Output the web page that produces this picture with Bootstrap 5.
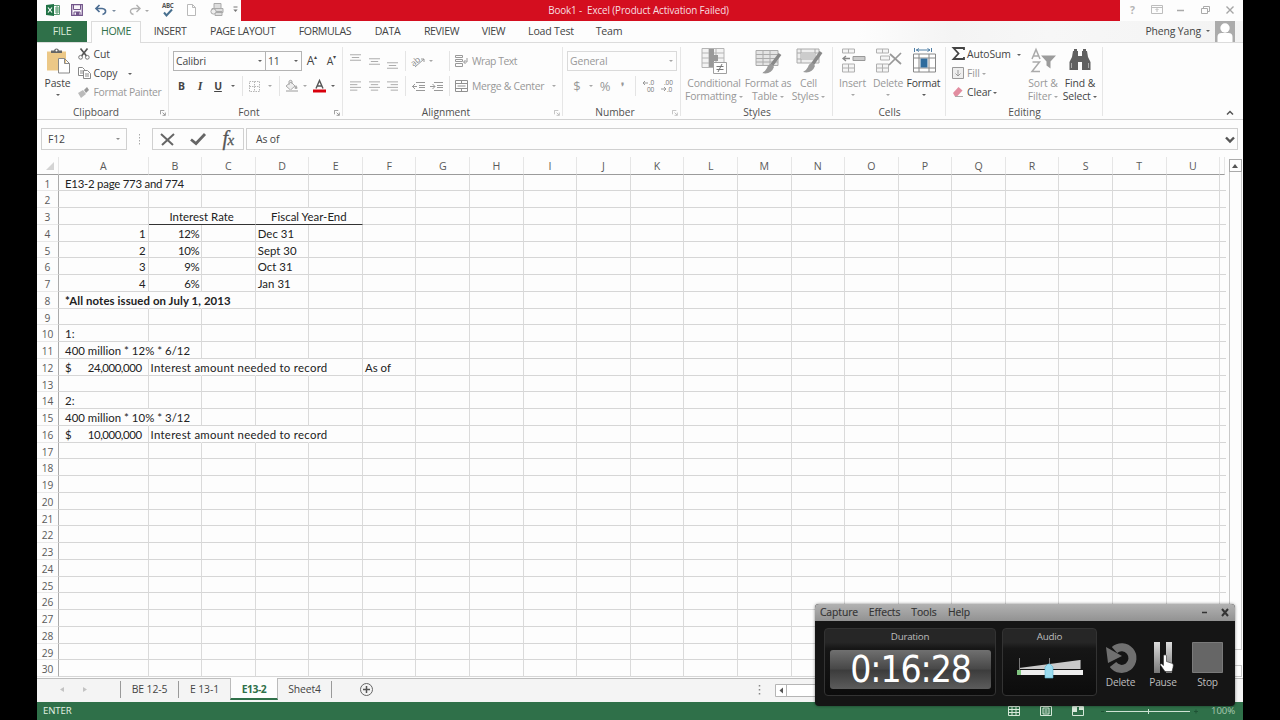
<!DOCTYPE html>
<html lang="en">
<head>
<meta charset="utf-8">
<meta name="viewport" content="width=device-width, initial-scale=1">
<title>Book1 - Excel</title>
<link href="https://cdn.jsdelivr.net/npm/bootstrap@5.3.0/dist/css/bootstrap.min.css" rel="stylesheet">
<style>
  body{background:#000;width:1280px;height:720px;overflow:hidden;font:10.4px/14px "Open Sans","Noto Sans",sans-serif;letter-spacing:-.12px;color:#444}
  .app{width:1206px;height:720px;margin-left:37px;background:#fdfdfd;overflow:hidden}
  svg{display:block;overflow:visible;flex:none}
  .nw{white-space:nowrap}
  .off{color:#989898}
  /* title bar */
  .titlebar{height:21px}
  .qat{display:grid;grid-template-columns:25px 24px 17px 17px 16px 16px 26px 23px 23px 8px;width:204px;padding-left:9px;align-items:center;height:19px}
  .redbar{width:879px;background:#d40e1f;color:#f7dfe0;font-size:9.9px;padding-right:84px;height:21px;line-height:21px}
  .wctl{display:grid;grid-template-columns:25px 24px 24px 25px 24px;height:19px;place-items:center;color:#b4b4b4}
  /* ribbon tabs */
  .rtabs{height:21px;background:linear-gradient(90deg,#fdfdfd 68%,#f4f4f4 76%,#f7f7f7 84%,#f3f3f3)}
  .rtabgrid{display:grid;grid-template-columns:50px 57px 52px 93px 72px 53px 55px 49px 66px 50px;line-height:21px;text-align:center;font-size:10.6px;letter-spacing:-.38px}
  .filetab{background:#2f7049;color:#d9ead9}
  .hometab{color:#2f7049;border:1px solid #dcdcdc;border-bottom:0;margin:0 3px 0 4px;background:#fdfdfd;line-height:19px;position:relative;height:22px}
  .mixed{letter-spacing:-.2px}
  .user{color:#444;font-size:10.4px;gap:5px;padding-bottom:2px}
  /* ribbon */
  .ribbon{height:78px;border-top:1px solid #dcdcdc;border-bottom:1px solid #d2d2d2}
  .rgroup{position:relative;display:flex;flex-direction:column}
  .rgroup::after{content:"";position:absolute;right:0;top:4px;bottom:3px;width:1px;background:#e6e6e6}
  .gbody{height:62px}
  .glabel{height:14px;line-height:15px;text-align:center;font-size:10.2px;color:#505050;position:relative;padding-right:14px;letter-spacing:0}
  .glabel.nolaunch{padding-right:0}
  .glabel svg{position:absolute;right:3px;top:5px}
  .w-clip{width:132px}.w-font{width:174px}.w-align{width:220px}.w-num{width:118px}.w-sty{width:152px}.w-cell{width:113px}.w-edit{width:157px}
  .big{display:flex;flex-direction:column;align-items:center;text-align:center;padding-top:5px;line-height:13.5px}
  .big svg.ic{margin-bottom:2.5px;width:26px;height:26px}
  .w-sty .big span,.w-cell .big span{letter-spacing:-.2px}
  .rrow{display:grid;align-items:center;justify-items:center}
  .vs{width:1px;height:20px;background:#e4e4e4}
  .arr{display:inline-block;border:2.3px solid transparent;border-top:2.8px solid currentColor;border-bottom:0;vertical-align:2px;opacity:.85}
  .clipcols{display:grid;grid-template-columns:41px 90px}
  .small3{display:grid;grid-template-rows:19px 19px 20px;padding-top:1px;align-items:center}
  .small3>div{display:grid;grid-template-columns:15px auto;align-items:center;justify-content:start}
  .clipcols .small3>div{grid-template-columns:15.5px auto}
  .painter{letter-spacing:-.32px}
  .fbox{display:flex;border:1px solid #b4b4b4;height:20px;align-items:center;justify-content:space-between;padding:0 3px 0 2px;width:100%}
  .fbox.gen{margin:8px 0 0 4px;width:110px;border-color:#dadada;color:#989898}
  .f1{grid-template-columns:93px 36px 20px 19px;margin:8px 0 0 4px;height:20px}
  .f1 sup{font-size:6px;top:-6px}
  .f2{grid-template-columns:19px 18px 18px 12px 6px 19px 11px 9px 15px 12px 17px 10px;margin:5px 0 0 3px;height:20px}
  .ital{font:italic 700 12px "Liberation Serif",serif}
  .a1,.a2{grid-template-columns:19px 18.5px 18.5px 6px 20px 17px 9px 15px auto auto;justify-content:start;margin:8px 0 0 3px;height:20px}
  .a1{letter-spacing:-.25px}
  .a2{margin-top:5px;letter-spacing:-.3px}
  .n2{grid-template-columns:20px 7px 22px 13px 13px 15px 20px;margin:5px 0 0 4px;height:20px}
  .sym{font-size:13px}
  .s1{display:grid;grid-template-columns:62px 46px 35px;padding-left:2px}
  .c1{display:grid;grid-template-columns:35px 36px 35px;padding-left:2px}
  .e1{display:grid;grid-template-columns:74px 34px 40px;padding-left:6px}
  .dark{color:#3c3c3c}
  /* formula bar */
  .fbar{height:37px;padding:8px 5px 0 4px}
  .fb{height:22px;border:1px solid #d0d0d0;display:flex;align-items:center}
  .fb.nm{width:86px;padding:0 6px;justify-content:space-between}
  .fb.bt{width:92px;display:grid;grid-template-columns:29px 31px 30px;place-items:center}
  .fb.tx{width:992px;padding:0 3px 0 9px;justify-content:space-between}
  .grip{width:25px;height:22px}
  .fxi{font:italic 20px/18px "Liberation Serif",serif;letter-spacing:-.5px;color:#555;-webkit-text-stroke:.3px #555}
  .fxi span{font-size:15px}
  /* worksheet */
  .sheetwrap{height:521px}
  .sheet{display:grid;grid-template-columns:22px 89.6px repeat(20,53.58px) 5px;grid-template-rows:17.6px repeat(30,16.75px);width:1188.5px;overflow:hidden;font-family:Lato,"Open Sans",sans-serif;font-size:11.4px;letter-spacing:.03px;color:#222}
  .hd{font:10.6px/18px "Open Sans",sans-serif;text-align:center;color:#5a5a5a;border-bottom:1px solid #9b9b9b;border-right:1px solid #e6e6e6}
  .rn{font:10.2px/18px "Open Sans",sans-serif;text-align:center;color:#5a5a5a;border-right:1px solid #ababab;border-bottom:1px solid #e8e8e8}
  .cl{border-right:1px solid #dadada;border-bottom:1px solid #d6d6d6;line-height:17.5px;white-space:pre;padding:0 2px 0 6px;min-width:0;overflow:visible}
  .cl.std{padding-left:2px}
  .cl.open{border-right-color:transparent}
  .cl.under{border-bottom-color:#333}
  .tight{letter-spacing:-.24px}
  .amt{letter-spacing:-.42px}
  .loose{letter-spacing:.28px}
  .boldnote{letter-spacing:.1px}
  .vscroll{width:13px;margin:2px 0 0 3px}
  .vscroll .up{height:13px;border:1px solid #aaa}
  .vscroll .track{height:478px;border:1px solid #c9c9c9;border-top:0}
  .vscroll .down{height:12px;border:1px solid #c9c9c9;margin-top:15px}
  /* sheet tabs, status bar */
  .stabs{height:24px;background:#f4f4f4;border-top:1px solid #bdbdbd;display:grid;grid-template-columns:84px 58px 51px 48px 54px 68px 374px 416px;text-align:center;line-height:21px}
  .stabs>div{height:21px}
  .sep{border-right:1px solid #9a9a9a;height:17px!important;line-height:17px;margin-top:2px}
  .tabnav{gap:19px;padding:0 14px 0 3px}
  .active-tab{background:#fdfdfd;color:#2f7049;font-weight:700;border-bottom:2px solid #2f7049;border-left:1px solid #bbb;border-right:1px solid #bbb;margin-top:-1px;letter-spacing:-.5px;line-height:23px;height:22px!important}
  .status{height:18px;background:#2f7049;color:#e3f0e3;line-height:18px;font-size:9.6px}
  .sicons{display:grid;grid-template-columns:33px 32px 31px 110px 40px;place-items:center;height:18px}
  .zoompct{color:#a9c9b1}
  /* recorder window floating over the workbook */
  .rec{position:absolute;left:815px;top:604px;width:420px;height:102px;border-radius:4px;background:#151515;box-shadow:0 0 3px rgba(0,0,0,.5);overflow:hidden;color:#bdbdbd}
  .rmenu{height:17px;background:linear-gradient(#b2b2b2,#929292);color:#333;line-height:16px;display:grid;grid-template-columns:48px 43px 36px 34px 219px 20px 19px;text-align:center;letter-spacing:-.1px;-webkit-text-stroke:.15px #333}
  .rbody{display:flex;padding:7px 0 0 9px}
  .panel{height:68px;border:1px solid #333;border-radius:4px;background:linear-gradient(#262626 20%,#161616 30%,#0c0c0c);text-align:center;line-height:16px;font-size:9.8px;letter-spacing:-.25px}
  .dur{width:172px;margin-right:6px}.aud{width:95px;margin-right:6px}
  .meter{margin-top:12px}
  .lcd{margin:5px 4px 0 5px;height:39px;border-radius:3px;background:linear-gradient(#707070,#484848 48%,#3c3c3c 52%,#5c5c5c);color:#fff;font:37px/40px "DejaVu Sans Condensed","DejaVu Sans",sans-serif;letter-spacing:-1.1px}
  .rbtns{display:grid;grid-template-columns:35px 50px 39px;text-align:center;padding-top:14px;line-height:14px;font-size:10.2px;letter-spacing:-.25px}
  .rbtns svg{margin:0 auto 2px}
</style>
</head>
<body>
<svg width="0" height="0" class="position-absolute">
  <symbol id="launch" viewBox="0 0 7 7"><path d="M.5 5V.5H5M3 3l3 3M6.2 3v3.2H3" fill="none" stroke="#8a8a8a"/></symbol>
  <symbol id="al" viewBox="0 0 12 10"><path d="M0 .5h12M0 3.5h8M0 6.5h12M0 9.5h8" stroke="#a5a5a5"/></symbol>
  <symbol id="ac" viewBox="0 0 12 10"><path d="M0 .5h12M2 3.5h8M0 6.5h12M2 9.5h8" stroke="#a5a5a5"/></symbol>
  <symbol id="ar" viewBox="0 0 12 10"><path d="M0 .5h12M4 3.5h8M0 6.5h12M4 9.5h8" stroke="#a5a5a5"/></symbol>
  <symbol id="a3" viewBox="0 0 12 7"><path d="M0 .5h12M2 3.5h8M0 6.5h12" stroke="#a5a5a5"/></symbol>
</svg>
<div class="app d-flex flex-column">
  <div class="titlebar d-flex">
    <div class="qat">
      <svg width="14" height="12" viewBox="0 0 14 12"><path d="M8 1.5h5.500v9H8M9 4h4M9 6h4M9 8h4M11 2v8" fill="none" stroke="#5a9b73"/><path d="M0 1l8-1v12l-8-1z" fill="#217346"/><path d="M2 3.500l4 5M6 3.500l-4 5" stroke="#fff" stroke-width="1.200"/></svg>
      <svg width="12" height="12" viewBox="0 0 12 12"><path d="M.7.700h10.600v10.600H.7z" fill="#f8f5fa" stroke="#72558a" stroke-width="1.300"/><path d="M2.500 1v4.500h7V1M3 11V8h6v3" fill="none" stroke="#72558a"/><path d="M5 8h3v3H5z" fill="#72558a"/></svg>
      <svg width="12" height="10" viewBox="0 0 12 10"><path d="M1 3.500H7Q11 4 10.500 7Q10 9 7.500 9.500M4.500 0L1 3.500L4.500 7" fill="none" stroke="#4c6d92" stroke-width="1.700"/></svg>
      <span><span class="arr" style="color:#64788f"></span></span>
      <svg width="12" height="10" viewBox="0 0 12 10"><path d="M11 3.500H5Q1 4 1.500 7Q2 9 4.500 9.500M7.500 0L11 3.500L7.500 7" fill="none" stroke="#b0b0b0" stroke-width="1.400"/></svg>
      <span><span class="arr off"></span></span>
      <svg width="14" height="14" viewBox="0 0 14 14"><text x="1" y="5" font-size="6.200" font-weight="700" fill="#555" letter-spacing="-.3">ABC</text><path d="M3 9.500l2.500 3L11 6.500" fill="none" stroke="#48708f" stroke-width="2"/></svg>
      <svg width="9" height="12" viewBox="0 0 9 12"><path d="M.5.500h5l3 3v8h-8zM5.500.500v3h3" fill="#fff" stroke="#b9b9b9"/></svg>
      <svg width="14" height="13" viewBox="0 0 14 13"><path d="M2 5.500h11v4H2zM4 5V.500h7V5M5 8.500h7v4H5z" fill="#ddd" stroke="#aaa"/><circle cx="3.500" cy="8.500" r="2.600" fill="#eee" stroke="#aaa"/></svg>
      <svg width="5" height="7"><path d="M.5 1h4" stroke="#777"/><path d="M.3 3.500h4.400L2.500 6z" fill="#777"/></svg>
    </div>
    <div class="redbar text-center nw">Book1 -&nbsp; Excel (Product Activation Failed)</div>
    <div class="wctl">
      <b>?</b>
      <svg width="12" height="9"><path d="M.5.500h11v8H.5zM.5 2.500h11M6 7V4M4.500 5L6 3.500 7.500 5" fill="none" stroke="#bdbdbd"/></svg>
      <svg width="8" height="2"><path d="M0 1.500h7" stroke="#aaa" stroke-width="1.500"/></svg>
      <svg width="9" height="8"><path d="M.5 2.500h6v5h-6zM2.500 2V.500h6v5h-2" fill="none" stroke="#aaa"/></svg>
      <svg width="8" height="8"><path d="M.5.500l7 7M7.500.500l-7 7" stroke="#a5a5a5" stroke-width="1.400"/></svg>
    </div>
  </div>
  <div class="rtabs d-flex justify-content-between">
    <div class="rtabgrid nw"><div class="filetab">FILE</div><div class="hometab">HOME</div><div>INSERT</div><div>PAGE LAYOUT</div><div>FORMULAS</div><div>DATA</div><div>REVIEW</div><div>VIEW</div><div class="mixed">Load Test</div><div class="mixed">Team</div></div>
    <div class="user d-flex align-items-center pe-2 nw"><span>Pheng Yang</span><span class="arr"></span>
      <svg width="20" height="20" viewBox="0 0 20 20"><path fill="#ababab" d="M0 0h20v21H0z"/><circle cx="10" cy="7" r="4.700" fill="#fff"/><path d="M2.500 21v-5q0-4 4-4h7q4 0 4 4v5z" fill="#fff"/></svg></div>
  </div>
  <div class="ribbon d-flex">
    <div class="rgroup w-clip"><div class="gbody clipcols">
      <div class="big"><svg class="ic" viewBox="0 0 26 26"><path d="M2 3.500h19v19H2z" fill="#ecc887"/><path d="M6 5V2.500h3q.5-2 2.500-2t2.500 2h3V5z" fill="#666"/><circle cx="11.500" cy="2.600" r="1" fill="#fff"/><path d="M13.500 10.500h6l5 5v9.500h-11zM19.500 10.500v5h5" fill="#fff" stroke="#888"/></svg><span>Paste</span><span class="arr mt-1"></span></div>
      <div class="small3 nw"><div><svg width="12" height="12" viewBox="0 0 12 12"><path d="M2.500.500L8.500 8M9.500.500L3.500 8" stroke="#555" stroke-width="1.700"/><circle cx="2.600" cy="9.300" r="1.900" fill="none" stroke="#777"/><circle cx="9.300" cy="9.300" r="1.900" fill="none" stroke="#777"/></svg><span>Cut</span></div>
      <div><svg width="13" height="12" viewBox="0 0 13 12"><path d="M.5.500h4l2 2v6h-6zM2 4h3M2 6h3" fill="#fff" stroke="#888"/><path d="M5.500 3.500h4l3 3v5h-7zM7 7h4M7 9h4" fill="#fff" stroke="#888"/></svg><span>Copy <span class="arr ms-2"></span></span></div>
      <div class="off"><svg width="12" height="11" viewBox="0 0 12 11"><path d="M0 6l5-3 3 4-5 4z" fill="#bbb"/><path d="M6 3l3-3 2 3-3 3z" fill="#999"/></svg><span class="painter">Format Painter</span></div></div>
    </div><div class="glabel">Clipboard<svg width="6" height="6"><use href="#launch"/></svg></div></div>

    <div class="rgroup w-font"><div class="gbody">
      <div class="rrow f1"><div class="fbox">Calibri<span class="arr"></span></div><div class="fbox border-start-0">11<span class="arr"></span></div><span style="font-size:12px">A<sup>▴</sup></span><span>A<sup>▾</sup></span></div>
      <div class="rrow f2"><b>B</b><i class="ital">I</i><b class="text-decoration-underline">U</b><span class="arr"></span><span class="vs"></span>
      <svg width="11" height="11"><path d="M.5.500h10v10H.5zM5.500.500v10M.5 5.500h10" fill="none" stroke="#b5b5b5" stroke-dasharray="1.500 1"/></svg><span class="arr off"></span><span class="vs"></span>
      <svg width="14" height="12" viewBox="0 0 14 12"><path d="M1 6l5-4 4 4-4.500 4zM4 5V1q2-1.500 3 0v3" fill="#eee" stroke="#aaa"/><path d="M11 5q3 4 0 4t0-4" fill="#aaa"/><path d="M1 11h12" stroke="#ccc" stroke-width="2"/></svg><span class="arr off"></span>
      <svg width="13" height="14" viewBox="0 0 13 14"><path d="M3 9.500L6.500 1.500 10 9.500M4.300 7h4.500" fill="none" stroke="#555" stroke-width="1.400"/><path d="M0 10.500h13v3H0z" fill="#d8000c"/></svg><span class="arr"></span></div>
    </div><div class="glabel">Font<svg width="6" height="6"><use href="#launch"/></svg></div></div>

    <div class="rgroup w-align off"><div class="gbody">
      <div class="rrow a1 nw"><svg width="11" height="7" class="mb-2"><use href="#a3"/></svg><svg width="11" height="7"><use href="#a3"/></svg><svg width="11" height="7" class="mt-2"><use href="#a3"/></svg><span class="vs"></span>
      <svg width="13" height="12" viewBox="0 0 13 12"><text x="-1" y="9" font-size="8.500" fill="#888" transform="rotate(-40 4 7)">ab</text><path d="M3 12L12 4M12 7V4H9" fill="none" stroke="#999"/></svg><span class="arr" style="justify-self:start;margin-left:1px"></span><span class="vs"></span>
      <svg width="13" height="12" viewBox="0 0 13 12"><path d="M.5.500h7v2h-7zM.5 4.500h7v2h-7zM.5 8.500h7v3h-7zM12 3v4H9M10.500 5L8.500 7l2 2" fill="none" stroke="#999"/></svg><span style="margin-left:3px;letter-spacing:-.5px">Wrap Text</span></div>
      <div class="rrow a2 nw"><svg width="11" height="10"><use href="#al"/></svg><svg width="11" height="10"><use href="#ac"/></svg><svg width="11" height="10"><use href="#ar"/></svg><span class="vs"></span>
      <svg width="13" height="9"><path d="M4 .5h9M7 3.500h6M7 5.500h6M4 8.500h9M0 4.500h5M3 2L.5 4.500 3 7" fill="none" stroke="#999"/></svg><svg width="13" height="9"><path d="M4 .5h9M7 3.500h6M7 5.500h6M4 8.500h9M0 4.500h5M2.500 2L5 4.500 2.500 7" fill="none" stroke="#999"/></svg><span class="vs"></span>
      <svg width="13" height="12"><path d="M.5.500h12v11H.5zM.5 3.500h12M.5 8.500h12M6.500 0v3.500M6.500 8.500v3M2.500 6h8" fill="none" stroke="#909090"/></svg><span style="margin-left:3px">Merge &amp; Center</span><span class="arr ms-2"></span></div>
    </div><div class="glabel">Alignment<svg width="6" height="6" opacity=".6"><use href="#launch"/></svg></div></div>

    <div class="rgroup w-num off"><div class="gbody">
      <div class="fbox gen">General<span class="arr"></span></div>
      <div class="rrow n2"><span class="sym">$</span><span class="arr"></span><span class="sym">%</span><b>❜</b><span class="vs"></span>
      <svg width="13" height="12"><text x="6" y="5" font-size="6.500" fill="#777">.0</text><text x="4" y="12" font-size="6.500" fill="#777">00</text><path d="M0 3h5M2 1L0 3l2 2" fill="none" stroke="#999"/></svg>
      <svg width="13" height="12"><text x="3" y="5" font-size="6.500" fill="#777">.00</text><text x="6" y="12" font-size="6.500" fill="#777">.0</text><path d="M0 9h5M3 7l2 2-2 2" fill="none" stroke="#999"/></svg></div>
    </div><div class="glabel">Number<svg width="6" height="6" opacity=".6"><use href="#launch"/></svg></div></div>

    <div class="rgroup w-sty off"><div class="gbody s1 nw">
      <div class="big"><svg class="ic" viewBox="0 0 26 26"><path d="M1 .5h22v19H1zM1 5h22M1 10h22M1 15h22M8 .5v19M15 .5v19" fill="#f3f3f3" stroke="#b5b5b5"/><path d="M8 1h5v6h4v6h-4v6H8z" fill="#999"/><path d="M12.500 14.500h13v11h-13z" fill="#fff" stroke="#a0a0a0"/><path d="M15.500 18.500h7M15.500 21.500h7M21 16l-4 8" stroke="#777"/></svg><span>Conditional</span><span>Formatting <span class="arr"></span></span></div>
      <div class="big"><svg class="ic" viewBox="0 0 26 26"><path d="M1 2.500h22v15H1zM1 6.500h22M1 10.500h22M1 14h22M8 2.500v15M15 2.500v15" fill="#e4e4e4" stroke="#aaa"/><path d="M25 6L16 18" stroke="#888" stroke-width="3.500"/><path d="M17 16q-4 0-5 4-2 4-5 5 9 2 12-6z" fill="#9a9a9a"/></svg><span>Format as</span><span>Table <span class="arr"></span></span></div>
      <div class="big"><svg class="ic" viewBox="0 0 26 26"><path d="M1 1h22v14H1zM1 5h22M1 11h22M5 1v14M19 1v14" fill="#eee" stroke="#aaa"/><path d="M5 5h14v6H5z" fill="#ccc"/><path d="M25 4L16 17" stroke="#888" stroke-width="3.500"/><path d="M17 15q-4 0-5 4-2 4-5 5 9 2 12-6z" fill="#9a9a9a"/></svg><span>Cell</span><span>Styles <span class="arr"></span></span></div>
    </div><div class="glabel nolaunch">Styles</div></div>

    <div class="rgroup w-cell off"><div class="gbody c1 nw">
      <div class="big"><svg class="ic" viewBox="0 0 26 26"><path d="M2.500 1h12v4h-12zM8.500 1v4M2.500 16h12v8h-12zM8.500 16v8M2.500 20h12" fill="#f5f5f5" stroke="#b0b0b0"/><path d="M13 8.500h12v4H13z" fill="#ccc" stroke="#999"/><path d="M3 10.500h7M6 8l-3 2.500L6 13" fill="none" stroke="#888" stroke-width="1.300"/></svg><span>Insert</span><span class="arr mt-1"></span></div>
      <div class="big"><svg class="ic" viewBox="0 0 26 26"><path d="M1.500 1h12v4h-12zM7.500 1v4M5.500 8h9v4h-9zM1.500 16h12v8h-12zM7.500 16v8M1.500 20h12" fill="#f5f5f5" stroke="#b0b0b0"/><path d="M15 6l11 10M26 5L14 17" stroke="#999" stroke-width="1.700"/></svg><span>Delete</span><span class="arr mt-1"></span></div>
      <div class="big dark"><svg class="ic" viewBox="0 0 26 26"><path d="M3.500 0v4M20.500 0v4M5 2h14M8 .5L5.500 2 8 3.500M16.500.500L19 2l-2.500 1.500" fill="none" stroke="#4f7ea5"/><path d="M2.500 6h22v18h-22zM2.500 10h22M2.500 20h22M8 6v18M18 6v18" fill="#fff" stroke="#888"/><path d="M9.500 10.500h7v9h-7z" fill="#2e6b9d"/></svg><span>Format</span><span class="arr mt-1"></span></div>
    </div><div class="glabel nolaunch">Cells</div></div>

    <div class="rgroup w-edit"><div class="gbody e1 nw">
      <div class="small3"><div><svg width="13" height="13" viewBox="0 0 13 13"><path d="M12 3V1H1.500l5 5.500-5 5.500H12V10" fill="none" stroke="#444" stroke-width="1.800"/></svg><span>AutoSum <span class="arr ms-1"></span></span></div>
      <div class="off"><svg width="12" height="12"><path d="M.5.500h11v11H.5zM6 3v6M3.500 6.500L6 9l2.500-2.500" fill="#eee" stroke="#999"/></svg><span>Fill <span class="arr"></span></span></div>
      <div><svg width="13" height="12" viewBox="0 0 13 12"><path d="M1 7l5.500-6 4 3.500L5 10.500H3z" fill="#e28da0"/><path d="M3 10.500h8" stroke="#aaa"/></svg><span>Clear <span class="arr" style="margin-left:-1px"></span></span></div></div>
      <div class="big off"><svg class="ic" viewBox="0 0 26 26"><path d="M2 11L6 1.500 10 11M3.500 8h5M2.500 14h7L2 23.500h8" fill="none" stroke="#aaa" stroke-width="1.500"/><path d="M11 7.500h15l-5.500 6v7l-4-3v-4z" fill="#9c9c9c"/></svg><span>Sort &amp;</span><span>Filter <span class="arr"></span></span></div>
      <div class="big"><svg class="ic" viewBox="0 0 26 26"><path d="M6 3h5v5h4V3h5l1 6 2.500 5v8h-8.500v-8h-4v8H2.500v-8L5 9z" fill="#606060"/><path d="M4.500 15v5M21.500 15v5" stroke="#aaa"/><path d="M7 1h3v2H7zM16 1h3v2h-3z" fill="#606060"/></svg><span>Find &amp;</span><span>Select <span class="arr"></span></span></div>
    </div><div class="glabel nolaunch">Editing</div></div>
    <div class="flex-grow-1 d-flex justify-content-end align-items-end pe-2 pb-1"><svg width="8" height="5"><path d="M0 4.500l3-3 3 3" fill="none" stroke="#555" stroke-width="1.500"/></svg></div>
  </div>

  <div class="fbar d-flex">
    <div class="fb nm">F12<span class="arr" style="color:#777"></span></div>
    <div class="grip d-flex justify-content-center align-items-center"><svg width="1" height="11"><path d="M.5 0v11" stroke="#aaa" stroke-dasharray="1.500 1.500"/></svg></div>
    <div class="fb bt"><svg width="15" height="13" viewBox="0 0 15 13"><path d="M1 1l12 11M14 1L2 12" stroke="#666" stroke-width="2"/></svg><svg width="16" height="12" viewBox="0 0 16 12"><path d="M1 6.500l5 4L15 1" fill="none" stroke="#666" stroke-width="2.800"/></svg><i class="fxi">f<span>x</span></i></div>
    <div class="fb tx ms-auto"><span>As of</span><svg width="8" height="7"><path d="M0 1.500l4 4 4-4" fill="none" stroke="#555" stroke-width="2.400"/></svg></div>
  </div>

  <div class="sheetwrap d-flex">
    <div class="sheet" id="sheet"></div>
    <div class="vscroll"><div class="up d-flex justify-content-center align-items-center"><svg width="6" height="4"><path d="M0 4l3-4 3 4z" fill="#555"/></svg></div><div class="track"></div><div class="down"></div></div>
  </div>

  <div class="stabs nw">
    <div class="sep tabnav d-flex justify-content-center align-items-center"><svg width="4" height="5"><path d="M4 0v5L0 2.500z" fill="#c3c3c3"/></svg><svg width="4" height="5"><path d="M0 0v5l4-2.500z" fill="#c3c3c3"/></svg></div>
    <div class="sep">BE 12-5</div><div class="sep border-0">E 13-1</div><div class="active-tab">E13-2</div><div class="sep">Sheet4</div>
    <div class="d-flex justify-content-center align-items-center"><svg width="13" height="13"><circle cx="6.500" cy="6.500" r="6" fill="none" stroke="#666"/><path d="M3 6.500h7M6.500 3v7" stroke="#555" stroke-width="1.500"/></svg></div>
    <div></div>
    <div class="d-flex align-items-center"><svg width="416" height="14"><path d="M-14.500 2v1.500M-14.500 6v1.500M-14.500 10v1.500" stroke="#888" stroke-width="1.500"/><path d="M1.500 1.500h455v12h-455zM12.500 1.500v12" fill="#fff" stroke="#b5b5b5"/><path d="M9 4.500v6L5.500 7.500z" fill="#555"/></svg></div>
  </div>
  <div class="status d-flex justify-content-between"><span style="padding-left:6px">ENTER</span>
    <div class="sicons">
      <svg width="12" height="10"><path d="M.5.500h11v9H.5zM4 0v10M8 0v10M0 3.500h12M0 6.500h12" fill="none" stroke="#d6e8d9"/></svg>
      <svg width="12" height="10"><path d="M.5.500h11v9H.5zM3 2h6v6H3zM4.500 4h3M4.500 6h3" fill="none" stroke="#d6e8d9"/></svg>
      <svg width="12" height="10"><path d="M.5.500h11v9H.5z" fill="none" stroke="#d6e8d9"/><path d="M1 1h4v5H1zM7 1h4v3H7z" fill="#d6e8d9"/></svg>
      <svg width="84" height="7"><path d="M0 3.500h84M42.500 1v5" stroke="#cfe2d3"/><path d="M-5 3.500h3M88 3.500h4M90 1.500v4" stroke="#1f5335"/></svg>
      <span class="zoompct">100%</span></div></div>
</div>

<div class="rec">
  <div class="rmenu"><span>Capture</span><span>Effects</span><span>Tools</span><span>Help</span><span></span><span><svg width="6" height="17" class="mx-auto"><path d="M0 8.500h5" stroke="#333" stroke-width="1.500"/></svg></span><span><svg width="8" height="17" class="mx-auto"><path d="M1 5l6 7M7 5l-6 7" stroke="#333" stroke-width="2"/></svg></span></div>
  <div class="rbody">
    <div class="panel dur">Duration<div class="lcd">0:16:28</div></div>
    <div class="panel aud">Audio<svg width="68" height="22" class="mx-auto meter"><path d="M3 11L64 3v9H3z" fill="#c9c9c9"/><path d="M3.500 1v12M33.500 1v12M64.500 3v9" stroke="#777"/><path d="M1 13h66v5H1z" fill="#eee"/><path d="M1 13h4v5H1z" fill="#7fc37f"/><path d="M29 21v-11l3-3h2l3 3v11z" fill="#9bdcf0" stroke="#5db3d0" stroke-width=".6"/></svg></div>
    <div class="rbtns">
      <div><svg width="32" height="31" viewBox="0 0 32 31"><path d="M9.500 8A10.800 10.800 0 1 1 8 22.500" fill="none" stroke="#707070" stroke-width="8"/><path d="M1 5l2 16 14-7z" fill="#707070"/></svg>Delete</div>
      <div><svg width="24" height="31"><defs><linearGradient id="pg" x1="0" y1="0" x2="0" y2="1"><stop offset="0" stop-color="#ddd"/><stop offset="1" stop-color="#777"/></linearGradient></defs><path d="M3 0h6v31H3zM15 0h6v31h-6z" fill="url(#pg)"/><path d="M12.500 13.500q1.500-1.500 3 0v6l6 2q1.500 1 .5 4l-1 4h-7l-5-7q1-2 3.500 1z" fill="#fff" stroke="#333" stroke-width=".6"/></svg>Pause</div>
      <div><svg width="31" height="31"><path fill="#666" stroke="#7a7a7a" d="M.5.500h30v30H.5z"/></svg>Stop</div>
    </div>
  </div>
</div>

<script src="https://cdn.jsdelivr.net/npm/bootstrap@5.3.0/dist/js/bootstrap.bundle.min.js"></script>
<script>
  // value: [text, classes, column span]
  const cells = {
    A1:['E13-2 page 773 and 774','tight'], B3:['Interest Rate','text-center',2], D3:['Fiscal Year-End','text-center',2],
    A4:['1','text-end'], A5:['2','text-end'], A6:['3','text-end'], A7:['4','text-end'],
    B4:['12%','text-end amt'], B5:['10%','text-end amt'], B6:['9%','text-end amt'], B7:['6%','text-end amt'],
    D4:['Dec 31'], D5:['Sept 30'], D6:['Oct 31'], D7:['Jan 31'],
    A8:['*All notes issued on July 1, 2013','fw-bold boldnote'], A10:['1:'], A11:['400 million * 12% * 6/12'],
    A12:['$|24,000,000','amt'], B12:['Interest amount needed to record','loose'], F12:['As of'],
    A14:['2:'], A15:['400 million * 10% * 3/12'], A16:['$|10,000,000','amt'], B16:['Interest amount needed to record','loose']
  };
  // cells whose right gridline is covered by text running over it
  const open = new Set(['A1','A8','B8','A11','A15','B12','C12','D12','B16','C16','D16']);
  const cols = 'ABCDEFGHIJKLMNOPQRSTU'.split('');
  let html = '<div class="hd d-flex justify-content-end align-items-end"><svg width="8" height="8" class="me-1 mb-1"><path d="M8 0v8H0z" fill="#d4d4d4"/></svg></div>' +
    cols.map(c => `<div class="hd">${c}</div>`).join('') + '<div class="hd"></div>';
  for (let r = 1; r <= 30; r++) {
    html += `<div class="rn">${r}</div>`;
    for (let i = 0; i < cols.length; i++) {
      const key = cols[i] + r, v = cells[key] || [''];
      const cls = ['cl', v[1] || '', i ? 'std' : '', open.has(key) ? 'open' : '', r === 3 && i > 0 && i < 5 ? 'under' : ''];
      const [sign, amount] = v[0].split('|');
      const t = amount ? `<span class="d-flex justify-content-between pe-1"><span>${sign}</span><span>${amount}</span></span>` : v[0];
      html += `<div class="${cls.filter(Boolean).join(' ')}"${v[2] ? ` style="grid-column:span ${v[2]}"` : ''}>${t}</div>`;
      if (v[2]) i += v[2] - 1;
    }
    html += '<div class="cl"></div>';
  }
  document.getElementById('sheet').innerHTML = html;
</script>
</body>
</html>
